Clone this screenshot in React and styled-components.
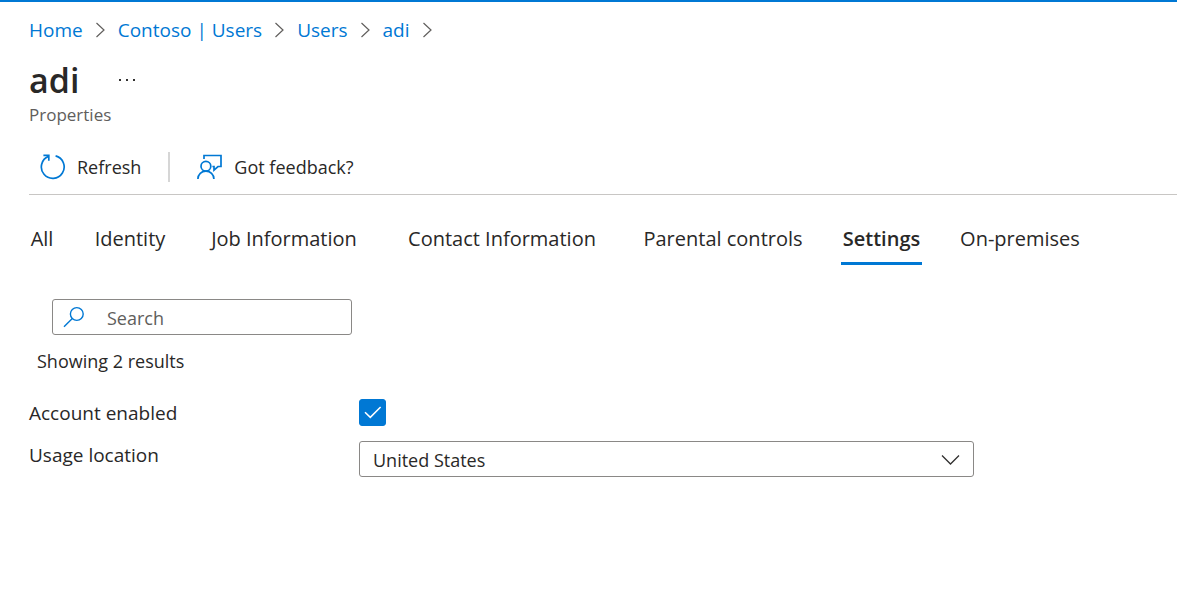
import React, { useState } from "react";
import styled, { createGlobalStyle } from "styled-components";

const GlobalStyle = createGlobalStyle`
  * {
    box-sizing: border-box;
  }
  body {
    margin: 0;
    background: #fff;
    color: #292827;
    font-family: "Segoe UI", "Open Sans", "Noto Sans", sans-serif;
    font-size: 18px;
    line-height: 24px;
  }
  button, input, select {
    font: inherit;
    color: inherit;
  }
`;

const Page = styled.div`
  border-top: 2px solid #0078d4;
  padding-left: 29px;
`;

const Breadcrumb = styled.nav`
  display: flex;
  align-items: center;
  gap: 12px;
  padding-top: 14px;
  font-size: 19px;
  line-height: 28px;
`;

const Crumb = styled.a`
  color: #0078d4;
  text-decoration: none;
  white-space: nowrap;

  &:hover {
    text-decoration: underline;
  }
`;

const Icon = styled.svg`
  display: block;
  flex: none;
  fill: none;
  stroke: ${(props) => props.$color || "#0078d4"};
  stroke-width: ${(props) => props.$stroke || 2};
`;

const TitleRow = styled.div`
  display: flex;
  align-items: center;
  gap: 39px;
  padding-top: 13px;
`;

const Title = styled.h1`
  margin: 0;
  font-size: 34px;
  line-height: 46px;
  font-weight: 600;
`;

const PlainButton = styled.button`
  display: flex;
  align-items: center;
  gap: 11px;
  padding: 0;
  border: 0;
  background: none;
  white-space: nowrap;
  cursor: pointer;
`;

const Subtitle = styled.p`
  margin: 0;
  color: #605e5c;
  font-size: 17px;
  line-height: 24px;
`;

const Toolbar = styled.div`
  display: flex;
  align-items: center;
  gap: 27px;
  height: 68px;
  padding: 24px 11px 11px;
  border-bottom: 1px solid #c8c6c4;
`;

const Divider = styled.span`
  width: 2px;
  height: 30px;
  background: #d6d6d6;
`;

const Tabs = styled.div`
  display: flex;
  gap: 36px;
  padding-top: 26px;
`;

const Tab = styled.button`
  flex: none;
  width: ${(props) => props.$width}px;
  height: 44px;
  padding: 0 0 6px;
  border: 0;
  border-bottom: 3px solid ${(props) => (props.$active ? "#0078d4" : "transparent")};
  background: none;
  font-size: 20px;
  font-weight: ${(props) => (props.$active ? 600 : 400)};
  white-space: nowrap;
  cursor: pointer;
`;

const SearchBox = styled.label`
  display: flex;
  align-items: center;
  gap: 22px;
  width: 300px;
  height: 36px;
  margin: 34px 0 0 23px;
  padding: 0 10px;
  border: 1px solid #8a8886;
  border-radius: 3px;
`;

const SearchInput = styled.input`
  flex: 1;
  min-width: 0;
  padding: 2px 0 0;
  border: 0;
  outline: 0;
  background: none;

  &::placeholder {
    color: #605e5c;
    opacity: 1;
  }
`;

const Results = styled.p`
  margin: 14px 0 26px 8px;
`;

const Field = styled.div`
  display: grid;
  grid-template-columns: 330px minmax(0, 615px);
  margin-bottom: 15px;
`;

const FieldLabel = styled.label`
  padding-top: 2px;
  font-size: 19px;
`;

const CheckWrap = styled.span`
  position: relative;
  width: 27px;
  height: 27px;

  svg {
    position: absolute;
    inset: 0;
    pointer-events: none;
  }
`;

const Checkbox = styled.input`
  display: block;
  appearance: none;
  width: 27px;
  height: 27px;
  margin: 0;
  border: 1px solid #8a8886;
  border-radius: 3px;
  cursor: pointer;

  &:checked {
    border-color: #0078d4;
    background: #0078d4;
  }
`;

const SelectWrap = styled.span`
  position: relative;

  svg {
    position: absolute;
    top: 13px;
    right: 14px;
    pointer-events: none;
  }
`;

const Select = styled.select`
  display: block;
  appearance: none;
  width: 100%;
  height: 36px;
  padding: 2px 40px 0 13px;
  border: 1px solid #8a8886;
  border-radius: 3px;
  background: #fff;
`;

const crumbs = ["Home", "Contoso | Users", "Users", "adi"];

const tabs = [
  { name: "All", width: 26 },
  { name: "Identity", width: 78 },
  { name: "Job Information", width: 158 },
  { name: "Contact Information", width: 206 },
  { name: "Parental controls", width: 164 },
  { name: "Settings", width: 81 },
  { name: "On-premises", width: 124 },
];

const App = () => {
  const [activeTab, setActiveTab] = useState("Settings");
  const [search, setSearch] = useState("");
  const [enabled, setEnabled] = useState(true);

  return (
    <Page>
      <GlobalStyle />
      <Breadcrumb aria-label="Breadcrumb">
        {crumbs.map((crumb) => (
          <React.Fragment key={crumb}>
            <Crumb href="#">{crumb}</Crumb>
            <Icon width="11" height="16" viewBox="0 0 11 16" $color="#605e5c" $stroke={1.2}>
              <path d="M1.5 1l7.5 7-7.5 7" />
            </Icon>
          </React.Fragment>
        ))}
      </Breadcrumb>

      <TitleRow>
        <Title>adi</Title>
        <PlainButton aria-label="More">
          <Icon width="18" height="4" viewBox="0 0 18 4" $color="none">
            <path d="M1 1h2v2H1zM8 1h2v2H8zM15 1h2v2h-2z" fill="#323130" />
          </Icon>
        </PlainButton>
      </TitleRow>
      <Subtitle>Properties</Subtitle>

      <Toolbar>
        <PlainButton>
          <Icon width="26" height="26" viewBox="0 0 26 26" $stroke={1.7}>
            <path d="M15.6 1.9A11.4 11.4 0 1 1 8.4 2.4" />
            <path d="M3.4 1.4h5.4v5.4" />
          </Icon>
          Refresh
        </PlainButton>
        <Divider />
        <PlainButton>
          <Icon width="26" height="26" viewBox="0 0 26 26" $stroke={1.7}>
            <circle cx="8.9" cy="12.3" r="4.9" />
            <path d="M0.9 25c0-4.6 3.6-7.8 8-7.8s8 3.2 8 7.8" />
            <path d="M7 5V1.5h17v11h-3l-4 3.6v-3.6h-1.6" />
          </Icon>
          Got feedback?
        </PlainButton>
      </Toolbar>

      <Tabs role="tablist">
        {tabs.map((tab) => (
          <Tab
            key={tab.name}
            role="tab"
            aria-selected={tab.name === activeTab}
            $active={tab.name === activeTab}
            $width={tab.width}
            onClick={() => setActiveTab(tab.name)}
          >
            {tab.name}
          </Tab>
        ))}
      </Tabs>

      <SearchBox>
        <Icon width="22" height="22" viewBox="0 0 22 22" $stroke={1.4}>
          <circle cx="13.8" cy="8" r="6.4" />
          <path d="M9.3 12.5L1 20.8" />
        </Icon>
        <SearchInput
          type="text"
          aria-label="Search"
          placeholder="Search"
          value={search}
          onChange={(e) => setSearch(e.target.value)}
        />
      </SearchBox>
      <Results>Showing 2 results</Results>

      <Field>
        <FieldLabel htmlFor="enabled">Account enabled</FieldLabel>
        <CheckWrap>
          <Checkbox
            id="enabled"
            type="checkbox"
            checked={enabled}
            onChange={(e) => setEnabled(e.target.checked)}
          />
          {enabled && (
            <Icon width="27" height="27" viewBox="0 0 27 27" $color="#fff" $stroke={1.5}>
              <path d="M6 13.2l5.3 5.2L21.6 8" />
            </Icon>
          )}
        </CheckWrap>
      </Field>
      <Field>
        <FieldLabel htmlFor="location">Usage location</FieldLabel>
        <SelectWrap>
          <Select id="location" defaultValue="United States">
            <option>United States</option>
            <option>Canada</option>
            <option>United Kingdom</option>
          </Select>
          <Icon width="19" height="12" viewBox="0 0 19 12" $color="#323130" $stroke={1.3}>
            <path d="M1 1.5l8.5 8.5L18 1.5" />
          </Icon>
        </SelectWrap>
      </Field>
    </Page>
  );
};

export default App;
